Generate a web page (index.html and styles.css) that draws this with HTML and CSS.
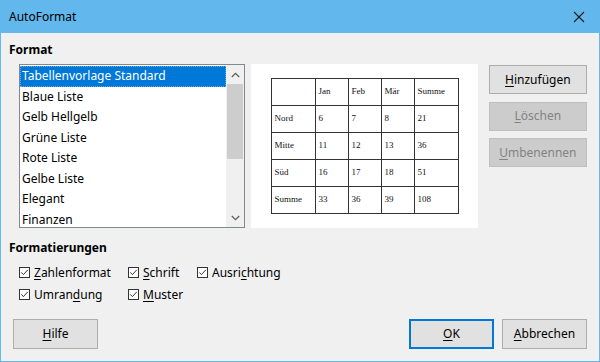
FILE: index.html
```html
<!DOCTYPE html>
<html lang="de">
<head>
<meta charset="utf-8">
<title>AutoFormat</title>
<link rel="stylesheet" href="styles.css">
</head>
<body>
<div class="window">
  <div class="titlebar">
    <span class="title">AutoFormat</span>
    <svg class="close" width="12" height="12" viewBox="0 0 12 12"><path d="M1 1 L11 11 M11 1 L1 11" stroke="#1a1a1a" stroke-width="1.1" fill="none"/></svg>
  </div>
  <div class="content">
    <div class="section-label">Format</div>
    <div class="main-row">
      <div class="listbox">
        <ul class="items">
          <li class="item selected">Tabellenvorlage Standard</li>
          <li class="item">Blaue Liste</li>
          <li class="item">Gelb Hellgelb</li>
          <li class="item">Grüne Liste</li>
          <li class="item">Rote Liste</li>
          <li class="item">Gelbe Liste</li>
          <li class="item">Elegant</li>
          <li class="item">Finanzen</li>
        </ul>
        <div class="scrollbar">
          <div class="arrow"><svg width="9" height="6" viewBox="0 0 9 6"><path d="M0.8 5 L4.5 1.3 L8.2 5" stroke="#606060" stroke-width="1.3" fill="none"/></svg></div>
          <div class="track"><div class="thumb"></div></div>
          <div class="arrow"><svg width="9" height="6" viewBox="0 0 9 6"><path d="M0.8 1 L4.5 4.7 L8.2 1" stroke="#606060" stroke-width="1.3" fill="none"/></svg></div>
        </div>
      </div>
      <div class="preview">
        <table class="sample">
          <colgroup><col class="wide"><col class="narrow"><col class="narrow"><col class="narrow"><col class="wide"></colgroup>
          <tr><td></td><td>Jan</td><td>Feb</td><td>Mär</td><td>Summe</td></tr>
          <tr><td>Nord</td><td>6</td><td>7</td><td>8</td><td>21</td></tr>
          <tr><td>Mitte</td><td>11</td><td>12</td><td>13</td><td>36</td></tr>
          <tr><td>Süd</td><td>16</td><td>17</td><td>18</td><td>51</td></tr>
          <tr><td>Summe</td><td>33</td><td>36</td><td>39</td><td>108</td></tr>
        </table>
      </div>
      <div class="side-buttons">
        <button class="btn"><u>H</u>inzufügen</button>
        <button class="btn disabled"><u>L</u>öschen</button>
        <button class="btn disabled"><u>U</u>mbenennen</button>
      </div>
    </div>
    <div class="section-label second">Formatierungen</div>
    <div class="checks">
      <label class="check"><svg class="box" width="11" height="11" viewBox="0 0 11 11"><rect x="0.5" y="0.5" width="10" height="10" fill="#fff" stroke="#333"/><path d="M2.3 5.4 L4.4 7.6 L8.8 2.8" stroke="#333" stroke-width="1" fill="none"/></svg><span><u>Z</u>ahlenformat</span></label>
      <label class="check"><svg class="box" width="11" height="11" viewBox="0 0 11 11"><rect x="0.5" y="0.5" width="10" height="10" fill="#fff" stroke="#333"/><path d="M2.3 5.4 L4.4 7.6 L8.8 2.8" stroke="#333" stroke-width="1" fill="none"/></svg><span><u>S</u>chrift</span></label>
      <label class="check"><svg class="box" width="11" height="11" viewBox="0 0 11 11"><rect x="0.5" y="0.5" width="10" height="10" fill="#fff" stroke="#333"/><path d="M2.3 5.4 L4.4 7.6 L8.8 2.8" stroke="#333" stroke-width="1" fill="none"/></svg><span>Ausri<u>c</u>htung</span></label>
      <label class="check"><svg class="box" width="11" height="11" viewBox="0 0 11 11"><rect x="0.5" y="0.5" width="10" height="10" fill="#fff" stroke="#333"/><path d="M2.3 5.4 L4.4 7.6 L8.8 2.8" stroke="#333" stroke-width="1" fill="none"/></svg><span>Umran<u>d</u>ung</span></label>
      <label class="check"><svg class="box" width="11" height="11" viewBox="0 0 11 11"><rect x="0.5" y="0.5" width="10" height="10" fill="#fff" stroke="#333"/><path d="M2.3 5.4 L4.4 7.6 L8.8 2.8" stroke="#333" stroke-width="1" fill="none"/></svg><span><u>M</u>uster</span></label>
    </div>
    <div class="footer">
      <button class="btn footer-btn"><u>H</u>ilfe</button>
      <div class="footer-right">
        <button class="btn footer-btn default"><u>O</u>K</button>
        <button class="btn footer-btn"><u>A</u>bbrechen</button>
      </div>
    </div>
  </div>
</div>
</body>
</html>
```

FILE: styles.css
```css
* { box-sizing: border-box; }
html, body { margin: 0; padding: 0; }
body {
  width: 600px;
  height: 362px;
  overflow: hidden;
  font-family: "Noto Sans", "Open Sans", sans-serif;
  font-size: 12px;
  color: #000;
}
.window {
  width: 600px;
  height: 362px;
  background: #f0f0f0;
  border: 1px solid #62b8ec;
  border-top: none;
  display: flex;
  flex-direction: column;
}
.titlebar {
  height: 33px;
  margin: 0 -1px;
  background: #62b8ec;
  display: flex;
  align-items: center;
  justify-content: space-between;
  padding: 0 15px 0 9px;
  flex-shrink: 0;
}
.title { font-size: 12px; line-height: 16px; }
.close { display: block; }
.content {
  flex: 1;
  padding: 9px 12px 0 8px;
  display: flex;
  flex-direction: column;
}
.section-label {
  font-weight: bold;
  line-height: 16px;
  height: 16px;
}
.section-label.second { margin-top: 12px; }
.main-row {
  margin-top: 6px;
  display: flex;
  align-items: flex-start;
  height: 164px;
}
.listbox {
  margin-left: 10px;
  width: 228px;
  height: 164px;
  border: 1px solid #828790;
  background: #fff;
  display: flex;
}
.items {
  list-style: none;
  margin: 0;
  padding: 1px 0 0 0;
  flex: 1;
  overflow: hidden;
}
.item {
  height: 20.5px;
  line-height: 20px;
  padding-left: 2px;
  white-space: nowrap;
}
.item.selected {
  background: #0078d7;
  color: #fff;
  outline: 1px dotted #6aa9e0;
  outline-offset: -1px;
}
.scrollbar {
  width: 18px;
  background: #f0f0f0;
  display: flex;
  flex-direction: column;
}
.arrow {
  height: 19px;
  display: flex;
  align-items: center;
  justify-content: center;
}
.arrow svg { display: block; }
.track { flex: 1; padding: 0 1px; }
.thumb { height: 75px; background: #cdcdcd; }
.preview {
  margin-left: 6px;
  width: 228px;
  height: 164px;
  background: #fff;
  display: flex;
  align-items: center;
  justify-content: center;
}
.sample {
  border-collapse: collapse;
  table-layout: fixed;
  width: 188px;
  font-family: "Liberation Serif", serif;
  font-size: 9px;
  color: #111;
}
.sample col.wide { width: 44px; }
.sample col.narrow { width: 33px; }
.sample td {
  border: 1px solid #333;
  height: 27px;
  padding: 0 0 2px 3px;
  vertical-align: middle;
  white-space: nowrap;
}
.side-buttons {
  margin-left: 11px;
  margin-top: 1px;
  width: 99px;
  display: flex;
  flex-direction: column;
  gap: 7.5px;
}
.btn {
  font-family: inherit;
  font-size: 12px;
  color: #000;
  height: 29px;
  background: #e1e1e1;
  border: 1px solid #adadad;
  padding: 0;
  line-height: 16px;
}
.btn u { text-decoration-thickness: 1px; text-underline-offset: 2px; }
.btn.disabled {
  background: #cccccc;
  border-color: #bfbfbf;
  color: #838383;
}
.checks {
  margin-top: 5px;
  margin-left: 10px;
  display: grid;
  grid-template-columns: 109px 69px auto;
  grid-auto-rows: 22px;
}
.check {
  display: flex;
  align-items: center;
  white-space: nowrap;
}
.check .box { display: block; margin-right: 4px; flex-shrink: 0; }
.check u { text-underline-offset: 2px; }
.footer {
  margin-top: 14px;
  padding-left: 4px;
  display: flex;
  justify-content: space-between;
}
.footer-right { display: flex; gap: 8px; }
.footer-btn { width: 85px; height: 30px; }
.footer-btn.default { border: 2px solid #0078d7; }
```
